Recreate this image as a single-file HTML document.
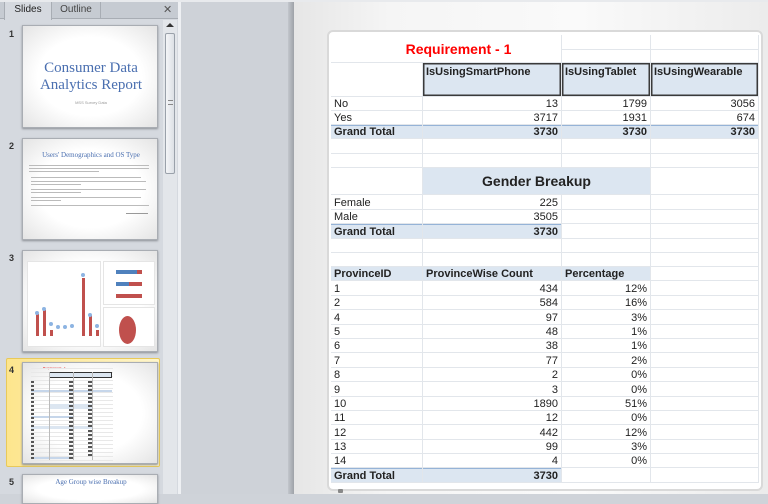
<!DOCTYPE html>
<html><head><meta charset="utf-8"><style>
*{margin:0;padding:0;box-sizing:border-box}
body{width:768px;height:494px;overflow:hidden;position:relative;background:#cfd3d9;font-family:"Liberation Sans",sans-serif}
.a{position:absolute}
.thumb{position:absolute;left:22px;width:136px;background:radial-gradient(ellipse at center,#fff 55%,#e4e4e4 100%);border:1px solid #a9adb3;box-shadow:0 1px 2px #8a8e94;overflow:hidden}
.num{position:absolute;left:9px;font:bold 9px "Liberation Sans",sans-serif;color:#333}
.tl{position:absolute;background:#bbb;height:1px}
table{border-collapse:separate;border-spacing:0;table-layout:fixed;position:absolute;left:331px;top:35px;font-size:11px;color:#222}
td{border-right:1px solid #e2e6eb;border-bottom:1px solid #e2e6eb;padding:0 3px;white-space:nowrap;overflow:hidden;line-height:12px;vertical-align:bottom}
.r{text-align:right}
.b{font-weight:bold}
.bl{background:#dce6f1}
.gt td{box-shadow:inset 0 1px 0 #95b3d7}
.hd{background:#dce6f1;vertical-align:top;padding-top:3px;font-weight:bold;box-shadow:inset 0 0 0 1.5px #3a3a3a}
</style></head><body>
<div class="a" style="left:0;top:0;width:178px;height:494px;background:#d5d9df"></div>
<div class="a" style="left:0;top:0;width:178px;height:19px;background:#c6cbd2;border-bottom:1px solid #a8adb4"></div>
<div class="a" style="left:4px;top:0;width:48px;height:20px;background:#d5d9df;border:1px solid #a8adb4;border-bottom:none;font-size:10px;color:#222;text-align:center;line-height:18px">Slides</div>
<div class="a" style="left:52px;top:1px;width:49px;height:18px;border-right:1px solid #a8adb4;font-size:10px;color:#444;text-align:center;line-height:17px">Outline</div>
<div class="a" style="left:163px;top:3px;font-size:11px;color:#555">✕</div>
<div class="a" style="left:163px;top:20px;width:14px;height:474px;background:#e3e6ea"></div>
<div class="a" style="left:166px;top:23px;width:0;height:0;border-left:4px solid transparent;border-right:4px solid transparent;border-bottom:4px solid #333"></div>
<div class="a" style="left:165px;top:33px;width:10px;height:141px;background:linear-gradient(90deg,#f4f5f7,#dde1e6);border:1px solid #9aa1aa;border-radius:2px"></div>
<div class="a" style="left:168px;top:100px;width:5px;height:5px;border-top:1px solid #888;border-bottom:1px solid #888"></div>
<div class="a" style="left:178px;top:0;width:3px;height:494px;background:#eef0f3"></div>
<div class="a" style="left:181px;top:0;width:110px;height:494px;background:#ced2d8"></div>
<div class="a" style="left:288px;top:0;width:6px;height:494px;background:linear-gradient(90deg,#c2c6cc,#9ea2a8)"></div>
<div class="a" style="left:294px;top:0;width:474px;height:494px;background:linear-gradient(90deg,#e6e6e6,#f5f5f5 20%,#fafafa 60%,#ececec)"></div>
<div class="a" style="left:0;top:0;width:768px;height:2px;background:#e8eaed"></div>

<div class="num" style="top:29px">1</div>
<div class="thumb" style="top:25px;height:103px">
<div class="a" style="left:0;top:34px;width:136px;text-align:center;font:15px 'Liberation Serif',serif;color:#4a6fb0;line-height:17px">Consumer Data<br>Analytics Report</div>
<div class="a" style="left:0;top:74px;width:136px;text-align:center;font-size:4px;color:#999">MSS Survey Data</div></div>
<div class="num" style="top:141px">2</div>
<div class="thumb" style="top:138px;height:102px">
<div class="a" style="left:0;top:12px;width:136px;text-align:center;font:7px 'Liberation Serif',serif;color:#4a6fb0">Users' Demographics and OS Type</div>
<div class="tl" style="left:6px;top:26px;width:120px"></div><div class="tl" style="left:6px;top:29px;width:120px"></div><div class="tl" style="left:6px;top:32px;width:70px"></div>
<div class="tl" style="left:8px;top:38px;width:110px"></div><div class="tl" style="left:8px;top:42px;width:115px"></div><div class="tl" style="left:8px;top:45px;width:50px"></div>
<div class="tl" style="left:8px;top:50px;width:115px"></div><div class="tl" style="left:8px;top:53px;width:50px"></div>
<div class="tl" style="left:8px;top:58px;width:110px"></div><div class="tl" style="left:8px;top:61px;width:30px"></div>
<div class="tl" style="left:8px;top:66px;width:118px"></div>
<div class="tl" style="left:103px;top:74px;width:22px;background:#999"></div></div>
<div class="num" style="top:253px">3</div>
<div class="thumb" style="top:250px;height:102px">
<div class="a" style="left:4px;top:10px;width:74px;height:86px;background:#fff;border:1px solid #e5e5e5">
<svg width="74" height="86"><g fill="#c0504d"><rect x="8" y="52" width="3" height="22"/><rect x="15" y="48" width="3" height="26"/><rect x="22" y="68" width="3" height="6"/><rect x="54" y="16" width="3" height="58"/><rect x="61" y="53" width="3" height="21"/><rect x="68" y="68" width="3" height="6"/></g><g fill="#8db4e2"><circle cx="9" cy="51" r="2"/><circle cx="16" cy="47" r="2"/><circle cx="23" cy="62" r="2"/><circle cx="30" cy="65" r="2"/><circle cx="37" cy="65" r="2"/><circle cx="44" cy="64" r="2"/><circle cx="55" cy="13" r="2"/><circle cx="62" cy="53" r="2"/><circle cx="69" cy="64" r="2"/></g></svg></div>
<div class="a" style="left:80px;top:10px;width:52px;height:44px;background:#fff;border:1px solid #e5e5e5">
<div class="a" style="left:12px;top:8px;width:26px;height:4px;background:linear-gradient(90deg,#4f81bd 80%,#c0504d 80%)"></div>
<div class="a" style="left:12px;top:20px;width:26px;height:4px;background:linear-gradient(90deg,#4f81bd 50%,#c0504d 50%)"></div>
<div class="a" style="left:12px;top:32px;width:26px;height:4px;background:#c0504d"></div></div>
<div class="a" style="left:80px;top:56px;width:52px;height:40px;background:#fff;border:1px solid #e5e5e5">
<div class="a" style="left:15px;top:8px;width:17px;height:28px;border-radius:50%;background:#c0504d"></div></div></div>
<div class="a" style="left:6px;top:358px;width:154px;height:109px;background:linear-gradient(90deg,#fde58d,#fff6cc);border:1px solid #e8c95a;border-radius:2px"></div>
<div class="num" style="top:365px">4</div>
<div class="thumb" style="top:362px;height:102px">
<div class="a" style="left:20px;top:3px;font-size:3px;color:#e33;font-weight:bold">Requirement - 1</div>
<div class="a" style="left:8px;top:2px;width:82px;height:96px;background:repeating-linear-gradient(180deg,transparent 0 3px,#e8e8e8 3px 4px)"></div>
<div class="a" style="left:26px;top:9px;width:63px;height:6px;border:1px solid #333;background:#dce6f1"></div>
<div class="a" style="left:8px;top:27px;width:81px;height:2px;background:#c6d6ea"></div>
<div class="a" style="left:26px;top:41px;width:43px;height:5px;background:#dce6f1"></div>
<div class="a" style="left:8px;top:53px;width:42px;height:2px;background:#c6d6ea"></div>
<div class="a" style="left:8px;top:63px;width:61px;height:3px;background:#dce6f1"></div>
<div class="a" style="left:8px;top:94px;width:42px;height:2px;background:#c6d6ea"></div>
<div class="a" style="left:26px;top:9px;width:1px;height:88px;background:#bbb"></div>
<div class="a" style="left:50px;top:9px;width:1px;height:88px;background:#bbb"></div>
<div class="a" style="left:69px;top:9px;width:1px;height:88px;background:#bbb"></div>
<div class="a" style="left:8px;top:18px;width:3px;height:78px;background:repeating-linear-gradient(180deg,#555 0 2px,transparent 2px 4px)"></div>
<div class="a" style="left:46px;top:18px;width:4px;height:78px;background:repeating-linear-gradient(180deg,#555 0 2px,transparent 2px 4px)"></div>
<div class="a" style="left:65px;top:18px;width:4px;height:48px;background:repeating-linear-gradient(180deg,#555 0 2px,transparent 2px 4px)"></div>
<div class="a" style="left:65px;top:67px;width:4px;height:27px;background:repeating-linear-gradient(180deg,#555 0 2px,transparent 2px 4px)"></div></div>
<div class="num" style="top:477px">5</div>
<div class="thumb" style="top:474px;height:30px">
<div class="a" style="left:0;top:3px;width:136px;text-align:center;font:7px 'Liberation Serif',serif;color:#4a6fb0">Age Group wise Breakup</div></div>

<div class="a" style="left:327px;top:30px;width:436px;height:461px;border:2px solid #d9d9d9;border-radius:6px;background:#fff"></div>
<table>
<colgroup><col style="width:92px"><col style="width:139px"><col style="width:89px"><col style="width:108px"></colgroup>
<tr style="height:15px"><td colspan="2" rowspan="2" style="text-align:center;vertical-align:middle;color:#f00;font-weight:bold;font-size:14px;padding-left:28px">Requirement - 1</td><td></td><td></td></tr>
<tr style="height:13px"><td></td><td></td></tr>
<tr style="height:34px"><td></td><td class="hd">IsUsingSmartPhone</td><td class="hd">IsUsingTablet</td><td class="hd">IsUsingWearable</td></tr>
<tr style="height:14px"><td>No</td><td class="r">13</td><td class="r">1799</td><td class="r">3056</td></tr>
<tr style="height:14px"><td>Yes</td><td class="r">3717</td><td class="r">1931</td><td class="r">674</td></tr>
<tr class="gt bl b" style="height:14px"><td>Grand Total</td><td class="r">3730</td><td class="r">3730</td><td class="r">3730</td></tr>
<tr style="height:14.5px"><td></td><td></td><td></td><td></td></tr>
<tr style="height:14.5px"><td></td><td></td><td></td><td></td></tr>
<tr style="height:27px"><td></td><td colspan="2" class="bl b" style="text-align:center;vertical-align:middle;font-size:14px">Gender Breakup</td><td></td></tr>
<tr style="height:14.5px"><td>Female</td><td class="r">225</td><td></td><td></td></tr>
<tr style="height:14.5px"><td>Male</td><td class="r">3505</td><td></td><td></td></tr>
<tr class="b" style="height:15px"><td class="bl" style="box-shadow:inset 0 1px 0 #95b3d7">Grand Total</td><td class="r bl" style="box-shadow:inset 0 1px 0 #95b3d7">3730</td><td></td><td></td></tr>
<tr style="height:14px"><td></td><td></td><td></td><td></td></tr>
<tr style="height:14px"><td></td><td></td><td></td><td></td></tr>
<tr class="b" style="height:14.4px"><td class="bl">ProvinceID</td><td class="bl">ProvinceWise Count</td><td class="bl">Percentage</td><td></td></tr>
<tr style="height:14.4px"><td>1</td><td class="r">434</td><td class="r">12%</td><td></td></tr>
<tr style="height:14.4px"><td>2</td><td class="r">584</td><td class="r">16%</td><td></td></tr>
<tr style="height:14.4px"><td>4</td><td class="r">97</td><td class="r">3%</td><td></td></tr>
<tr style="height:14.4px"><td>5</td><td class="r">48</td><td class="r">1%</td><td></td></tr>
<tr style="height:14.4px"><td>6</td><td class="r">38</td><td class="r">1%</td><td></td></tr>
<tr style="height:14.4px"><td>7</td><td class="r">77</td><td class="r">2%</td><td></td></tr>
<tr style="height:14.4px"><td>8</td><td class="r">2</td><td class="r">0%</td><td></td></tr>
<tr style="height:14.4px"><td>9</td><td class="r">3</td><td class="r">0%</td><td></td></tr>
<tr style="height:14.4px"><td>10</td><td class="r">1890</td><td class="r">51%</td><td></td></tr>
<tr style="height:14.4px"><td>11</td><td class="r">12</td><td class="r">0%</td><td></td></tr>
<tr style="height:14.4px"><td>12</td><td class="r">442</td><td class="r">12%</td><td></td></tr>
<tr style="height:14.4px"><td>13</td><td class="r">99</td><td class="r">3%</td><td></td></tr>
<tr style="height:14.4px"><td>14</td><td class="r">4</td><td class="r">0%</td><td></td></tr>
<tr class="b" style="height:15px"><td class="bl" style="box-shadow:inset 0 1px 0 #95b3d7">Grand Total</td><td class="r bl" style="box-shadow:inset 0 1px 0 #95b3d7">3730</td><td></td><td></td></tr>
</table>
<div class="a" style="left:338px;top:489px;width:5px;height:4px;background:#888;border-radius:1px"></div>
</body></html>
